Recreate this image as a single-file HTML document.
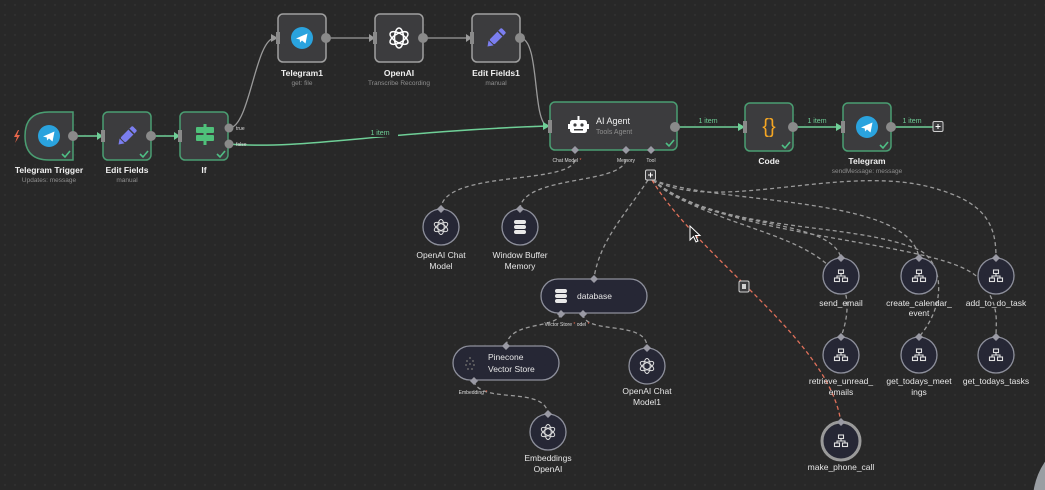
<!DOCTYPE html>
<html><head><meta charset="utf-8"><style>
html,body{margin:0;padding:0;background:#282828;width:1045px;height:490px;overflow:hidden}
svg{display:block}
text{font-family:"Liberation Sans",sans-serif}
.t{fill:#f0f0f0;font-size:8.5px;font-weight:bold;text-anchor:middle}
.s{fill:#8e8e8e;font-size:6.5px;text-anchor:middle}
.l{fill:#e6e6e6;font-size:8.5px;text-anchor:middle}
.d{fill:none;stroke:#9a9a9a;stroke-width:1.3;stroke-dasharray:4 3}
.g{fill:none;stroke:#6fcf97;stroke-width:1.5}
.gr{fill:none;stroke:#9a9a9a;stroke-width:1.3}
.n{fill:#3c3c3e;stroke:#4a9e72;stroke-width:1.5}
.ng{fill:#3c3c3e;stroke:#a0a0a0;stroke-width:1.5}
.c{fill:#262735;stroke:#8e909c;stroke-width:1.3}
.o{fill:#8a8a8a}
.h{fill:#8a8a8a}
.it{fill:#6fcf97;font-size:7px;text-anchor:middle}
.ck{fill:none;stroke:#4fbf85;stroke-width:1.6}
.hl{fill:#dcdcdc;font-size:5px;text-anchor:middle}
</style></head><body>
<svg width="1045" height="490" viewBox="0 0 1045 490" xmlns="http://www.w3.org/2000/svg">
<defs>
<pattern id="dots" width="10" height="10" patternUnits="userSpaceOnUse"><circle cx="5" cy="5" r="0.7" fill="#3a3a3a"/></pattern>
<g id="tg"><circle r="11" fill="#2aa3de"/><path d="M-6,0.5 L5.5,-4.5 L3.5,5.5 L0,2.5 L-2,4.5 L-2.2,1.5 Z" fill="#fff"/></g>
<g id="oa" fill="none" stroke="#fff" stroke-width="1.5"><ellipse rx="4.5" ry="10"/><ellipse rx="4.5" ry="10" transform="rotate(60)"/><ellipse rx="4.5" ry="10" transform="rotate(120)"/></g>
<g id="oas" fill="none" stroke="#dcdcdc" stroke-width="1"><ellipse rx="3.2" ry="7.5"/><ellipse rx="3.2" ry="7.5" transform="rotate(60)"/><ellipse rx="3.2" ry="7.5" transform="rotate(120)"/></g>
<g id="pen"><g transform="rotate(45)"><rect x="-3.5" y="-11" width="7" height="17" rx="1.5" fill="#7b7ef0"/><path d="M-3.5,7 L3.5,7 L0,12 Z" fill="#7b7ef0"/><rect x="-3.5" y="-7" width="7" height="1.5" fill="#3c3c3e"/></g></g>
<g id="tool" fill="none" stroke="#e0e0e0" stroke-width="1.1"><rect x="-2.5" y="-6" width="5" height="3.5"/><rect x="-6.5" y="2" width="5" height="3.5"/><rect x="1.5" y="2" width="5" height="3.5"/><path d="M0,-2.5 V0 M-4,2 V0 H4 V2"/></g>
<g id="db" fill="#e8e8e8"><rect x="-6" y="-7" width="12" height="4" rx="2"/><rect x="-6" y="-2" width="12" height="4" rx="2"/><rect x="-6" y="3" width="12" height="4" rx="2"/></g>
<g id="ck"><path d="M-4,0 L-1,3 L4,-3" class="ck"/></g>
</defs>
<rect width="1045" height="490" fill="#282828"/>
<rect width="1045" height="490" fill="url(#dots)"/>

<path class="g" d="M73,136 H100"/><path d="M97,132 L103,136 L97,140Z" fill="#6fcf97"/>
<path class="g" d="M151,136 H177"/><path d="M174,132 L180,136 L174,140Z" fill="#6fcf97"/>
<path class="gr" d="M229,128 C250,128 255,38 275,38"/><path d="M271,34 L278,38 L271,42Z" fill="#9a9a9a"/>
<path class="gr" d="M326,38 H372"/><path d="M369,34 L375,38 L369,42Z" fill="#9a9a9a"/>
<path class="gr" d="M423,38 H469"/><path d="M466,34 L472,38 L466,42Z" fill="#9a9a9a"/>
<path class="gr" d="M520,38 C540,38 532,120 547,126"/>
<path class="g" d="M229,144 C300,150 380,132 547,126"/><path d="M543,122 L550,126 L543,130Z" fill="#6fcf97"/>
<rect x="362" y="129" width="36" height="8" fill="#282828"/><text class="it" x="380" y="135">1 item</text>
<path class="g" d="M677,127 H742"/><path d="M738,123 L745,127 L738,131Z" fill="#6fcf97"/>
<text class="it" x="708" y="123">1 item</text>
<path class="g" d="M793,127 H840"/><path d="M836,123 L843,127 L836,131Z" fill="#6fcf97"/>
<text class="it" x="817" y="123">1 item</text>
<path class="g" d="M891,127 H933"/><text class="it" x="912" y="123">1 item</text>
<rect x="933" y="121.5" width="10" height="10" rx="1.5" fill="#3c3c3e" stroke="#d0d0d0" stroke-width="1"/><path d="M938,124 V129 M935.5,126.5 H940.5" stroke="#fff" stroke-width="1"/>

<path class="d" d="M575,160 C570,185 445,170 441,208"/>
<path class="d" d="M626,160 C620,185 525,175 520,208"/>
<path class="d" d="M648,180 C625,215 600,240 594,278"/>
<path class="d" d="M653,180 C700,230 830,215 841,258"/>
<path class="d" d="M653,180 C720,205 910,195 919,258"/>
<path class="d" d="M653,180 C720,215 850,160 940,190 C990,205 996,230 996,258"/>
<path class="d" d="M653,180 C720,235 850,220 919,250 C940,260 950,300 919,337"/>
<path class="d" d="M653,180 C720,240 880,230 841,337"/>
<path class="d" d="M653,180 C720,240 950,240 980,280 C1000,305 996,320 996,337"/>
<path d="M652,180 C700,260 830,340 841,423" fill="none" stroke="#e0705a" stroke-width="1.3" stroke-dasharray="4 3"/>
<path class="d" d="M561,314 C555,330 510,320 506,346"/>
<path class="d" d="M583,314 C585,335 645,320 647,346"/>
<path class="d" d="M474,381 C480,405 545,385 548,414"/>

<path class="n" d="M49,112 H73 V160 H49 Q25,160 25,136 Q25,112 49,112Z"/>
<use href="#tg" x="49" y="136"/><use href="#ck" x="66" y="154"/>
<path d="M18,130 L14,137 H17 L15,143 L20,135 H17 L19,130Z" fill="#e8664a"/>
<circle class="o" cx="73" cy="136" r="5"/>
<text class="t" x="49" y="173">Telegram Trigger</text><text class="s" x="49" y="182">Updates: message</text>
<rect class="n" x="103" y="112" width="48" height="48" rx="5"/>
<rect class="h" x="101" y="130" width="4" height="12"/>
<use href="#pen" x="127" y="136"/><use href="#ck" x="144" y="154"/>
<circle class="o" cx="151" cy="136" r="5"/>
<text class="t" x="127" y="173">Edit Fields</text><text class="s" x="127" y="182">manual</text>
<rect class="n" x="180" y="112" width="48" height="48" rx="5"/>
<rect class="h" x="178" y="130" width="4" height="12"/>
<rect x="196" y="127" width="18" height="6" rx="1" fill="#4fc07a"/><rect x="196" y="135" width="18" height="6" rx="1" fill="#4fc07a"/><rect x="203.5" y="124" width="3" height="21" fill="#4fc07a"/>
<use href="#ck" x="221" y="154"/>
<circle class="o" cx="229" cy="128" r="4.5"/><circle class="o" cx="229" cy="144" r="4.5"/>
<text x="236" y="130" fill="#ddd" font-size="5">true</text><text x="236" y="146" fill="#ddd" font-size="5">false</text>
<text class="t" x="204" y="173">If</text>
<rect class="ng" x="278" y="14" width="48" height="48" rx="5"/><rect class="h" x="276" y="32" width="4" height="12"/>
<use href="#tg" x="302" y="38"/><circle class="o" cx="326" cy="38" r="5"/>
<text class="t" x="302" y="76">Telegram1</text><text class="s" x="302" y="85">get: file</text>
<rect class="ng" x="375" y="14" width="48" height="48" rx="5"/><rect class="h" x="373" y="32" width="4" height="12"/>
<use href="#oa" x="399" y="38"/><circle class="o" cx="423" cy="38" r="5"/>
<text class="t" x="399" y="76">OpenAI</text><text class="s" x="399" y="85">Transcribe Recording</text>
<rect class="ng" x="472" y="14" width="48" height="48" rx="5"/><rect class="h" x="470" y="32" width="4" height="12"/>
<use href="#pen" x="496" y="38"/><circle class="o" cx="520" cy="38" r="5"/>
<text class="t" x="496" y="76">Edit Fields1</text><text class="s" x="496" y="85">manual</text>
<rect class="n" x="550" y="102" width="127" height="48" rx="5"/><rect class="h" x="548" y="120" width="4" height="13"/>
<rect x="570" y="120" width="17" height="13" rx="2.5" fill="#fff"/><rect x="568" y="124" width="2" height="5" fill="#fff"/><rect x="587" y="124" width="2" height="5" fill="#fff"/><rect x="577.5" y="116" width="2" height="4" fill="#fff"/><circle cx="575" cy="125" r="1.6" fill="#3c3c3e"/><circle cx="582" cy="125" r="1.6" fill="#3c3c3e"/><rect x="574" y="129" width="9" height="1.5" fill="#3c3c3e"/>
<text x="596" y="124" fill="#f0f0f0" font-size="9">AI Agent</text><text x="596" y="134" fill="#8e8e8e" font-size="7">Tools Agent</text>
<use href="#ck" x="670" y="143"/><circle class="o" cx="675" cy="127" r="5"/>
<path d="M575,146 L579,150 L575,154 L571,150Z M626,146 L630,150 L626,154 L622,150Z M651,146 L655,150 L651,154 L647,150Z" fill="#9a9aa4"/>
<text class="hl" x="567" y="162">Chat Model <tspan fill="#e8664a">*</tspan></text><text class="hl" x="626" y="162">Memory</text><text class="hl" x="651" y="162">Tool</text>
<rect x="645.5" y="170" width="10" height="10" rx="1.5" fill="#3c3c3e" stroke="#d0d0d0" stroke-width="1"/><path d="M650.5,172.5 V177.5 M648,175 H653" stroke="#fff" stroke-width="1"/>
<rect class="n" x="745" y="103" width="48" height="48" rx="5"/><rect class="h" x="743" y="121" width="4" height="12"/>
<text x="769" y="133" fill="#f5a623" font-size="20" text-anchor="middle" font-family="Liberation Mono">{}</text>
<use href="#ck" x="786" y="145"/><circle class="o" cx="793" cy="127" r="5"/>
<text class="t" x="769" y="164">Code</text>
<rect class="n" x="843" y="103" width="48" height="48" rx="5"/><rect class="h" x="841" y="121" width="4" height="12"/>
<use href="#tg" x="867" y="127"/><use href="#ck" x="884" y="145"/><circle class="o" cx="891" cy="127" r="5"/>
<text class="t" x="867" y="164">Telegram</text><text class="s" x="867" y="173">sendMessage: message</text>

<circle class="c" cx="441" cy="227" r="18"/><use href="#oas" x="441" y="227"/>
<text class="l" x="441" y="258">OpenAI Chat</text><text class="l" x="441" y="269">Model</text>
<circle class="c" cx="520" cy="227" r="18"/><use href="#db" x="520" y="227"/>
<text class="l" x="520" y="258">Window Buffer</text><text class="l" x="520" y="269">Memory</text>
<rect class="c" x="541" y="279" width="106" height="34" rx="17"/><use href="#db" x="561" y="296"/>
<text x="577" y="299" fill="#e6e6e6" font-size="8.5">database</text>
<path d="M594,275 L598,279 L594,283 L590,279Z M561,310 L565,314 L561,318 L557,314Z M583,310 L587,314 L583,318 L579,314Z" fill="#9a9aa4"/>
<text class="hl" x="567" y="326">Vector Store <tspan fill="#e8664a">*</tspan> odel <tspan fill="#e8664a">*</tspan></text>
<rect class="c" x="453" y="346" width="106" height="34" rx="17"/>
<g fill="#666"><circle cx="470" cy="358" r="1"/><circle cx="467" cy="361" r="1"/><circle cx="473" cy="361" r="1"/><circle cx="466" cy="365" r="1"/><circle cx="470" cy="364" r="1"/><circle cx="474" cy="365" r="1"/><circle cx="468" cy="369" r="1"/><circle cx="472" cy="369" r="1"/></g>
<text x="488" y="360" fill="#e6e6e6" font-size="8.5">Pinecone</text><text x="488" y="372" fill="#e6e6e6" font-size="8.5">Vector Store</text>
<path d="M506,342 L510,346 L506,350 L502,346Z M474,377 L478,381 L474,385 L470,381Z" fill="#9a9aa4"/>
<text class="hl" x="473" y="394">Embedding <tspan fill="#e8664a">*</tspan></text>
<circle class="c" cx="647" cy="366" r="18"/><use href="#oas" x="647" y="366"/>
<text class="l" x="647" y="394">OpenAI Chat</text><text class="l" x="647" y="405">Model1</text>
<circle class="c" cx="548" cy="432" r="18"/><use href="#oas" x="548" y="432"/>
<text class="l" x="548" y="461">Embeddings</text><text class="l" x="548" y="472">OpenAI</text>

<circle class="c" cx="841" cy="276" r="18"/><use href="#tool" x="841" y="276"/><text class="l" x="841" y="306">send_email</text>
<circle class="c" cx="919" cy="276" r="18"/><use href="#tool" x="919" y="276"/><text class="l" x="919" y="306">create_calendar_</text><text class="l" x="919" y="316">event</text>
<circle class="c" cx="996" cy="276" r="18"/><use href="#tool" x="996" y="276"/><text class="l" x="996" y="306">add_to_do_task</text>
<circle class="c" cx="841" cy="355" r="18"/><use href="#tool" x="841" y="355"/><text class="l" x="841" y="384">retrieve_unread_</text><text class="l" x="841" y="395">emails</text>
<circle class="c" cx="919" cy="355" r="18"/><use href="#tool" x="919" y="355"/><text class="l" x="919" y="384">get_todays_meet</text><text class="l" x="919" y="395">ings</text>
<circle class="c" cx="996" cy="355" r="18"/><use href="#tool" x="996" y="355"/><text class="l" x="996" y="384">get_todays_tasks</text>
<circle cx="841" cy="441" r="19" fill="#262735" stroke="#9a9a9a" stroke-width="3"/><use href="#tool" x="841" y="441"/><text class="l" x="841" y="470">make_phone_call</text>
<path d="M841,254 L845,258 L841,262 L837,258Z M919,254 L923,258 L919,262 L915,258Z M996,254 L1000,258 L996,262 L992,258Z M841,333 L845,337 L841,341 L837,337Z M919,333 L923,337 L919,341 L915,337Z M996,333 L1000,337 L996,341 L992,337Z M441,205 L445,209 L441,213 L437,209Z M520,205 L524,209 L520,213 L516,209Z M647,344 L651,348 L647,352 L643,348Z M548,410 L552,414 L548,418 L544,414Z M841,418 L845,422 L841,426 L837,422Z" fill="#9a9aa4"/>
<rect x="739" y="281" width="10" height="11" rx="1.5" fill="#3c3c3e" stroke="#d0d0d0" stroke-width="1"/><rect x="742" y="284" width="4" height="5" fill="#d0d0d0"/>
<path d="M690,226 L690,240 L693.5,236.5 L696,242 L698,241 L695.5,235.5 L700,235.5 Z" fill="#222" stroke="#fff" stroke-width="1"/>
<circle cx="1100" cy="500" r="67" fill="#9a9ea3"/>
</svg>
</body></html>
